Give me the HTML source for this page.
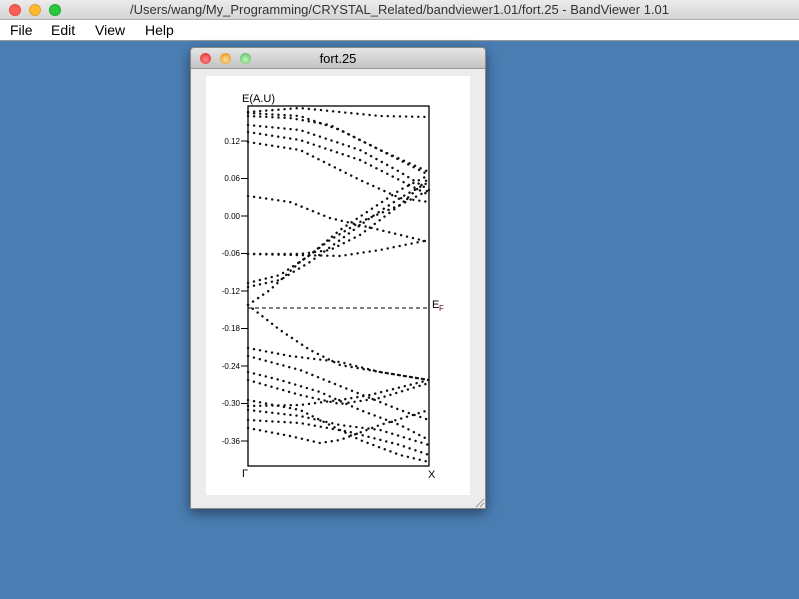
<!DOCTYPE html>
<html><head><meta charset="utf-8"><style>
*{margin:0;padding:0;box-sizing:border-box}
body{width:799px;height:599px;overflow:hidden;background:#4a7db2;font-family:"Liberation Sans",sans-serif;position:relative}
#tb{position:absolute;left:0;top:0;width:799px;height:20px;background:linear-gradient(#ececec,#d4d4d4);border-bottom:1px solid #b0b0b0;text-align:center;font-size:13px;line-height:20px;color:#333}
.d{position:absolute;width:12px;height:12px;border-radius:50%;top:4px}
#mb{position:absolute;left:0;top:20px;width:799px;height:21px;background:#fff;border-bottom:1px solid #999;font-size:14px;line-height:21px}
#mb span{position:absolute;top:0}
#win{position:absolute;left:190px;top:47px;width:296px;height:462px;background:#ececec;border:1px solid #888;border-radius:4px 4px 0 0;box-shadow:0 4px 12px rgba(0,0,0,.45)}
#wt{height:21px;background:linear-gradient(#e6e6e6,#c2c2c2);border-bottom:1px solid #999;text-align:center;font-size:13px;line-height:21px;border-radius:4px 4px 0 0}
.s{position:absolute;width:11px;height:11px;border-radius:50%;top:5px}
</style></head><body>
<div id="tb">/Users/wang/My_Programming/CRYSTAL_Related/bandviewer1.01/fort.25 - BandViewer 1.01</div>
<div class="d" style="left:9px;background:#fc5f57;border:1px solid #df4744"></div>
<div class="d" style="left:29px;background:#fdbc2e;border:1px solid #de9f34"></div>
<div class="d" style="left:49px;background:#28c840;border:1px solid #1aab29"></div>
<div id="mb"><span style="left:10px">File</span><span style="left:51px">Edit</span><span style="left:95px">View</span><span style="left:145px">Help</span></div>
<div id="win"><div id="wt">fort.25</div>
<div class="s" style="left:9px;background:radial-gradient(circle at 50% 60%,#f88,#d22);"></div>
<div class="s" style="left:29px;background:radial-gradient(circle at 50% 60%,#fd9,#d80);"></div>
<div class="s" style="left:49px;background:radial-gradient(circle at 50% 60%,#bfb,#5a5);"></div>
</div>
<svg style="position:absolute;left:0;top:0" width="799" height="599">
<rect x="206" y="76" width="264" height="419" fill="#fff"/>
<rect x="248" y="106" width="181" height="360" fill="none" stroke="#000" stroke-width="1.3"/>
<text x="242" y="102" font-size="11" font-family="Liberation Sans">E(A.U)</text>
<g font-size="8" font-family="Liberation Sans" text-anchor="end">
<text x="240" y="144">0.12</text><text x="240" y="181">0.06</text><text x="240" y="219">0.00</text><text x="240" y="256">-0.06</text><text x="240" y="294">-0.12</text><text x="240" y="331">-0.18</text><text x="240" y="369">-0.24</text><text x="240" y="406">-0.30</text><text x="240" y="444">-0.36</text>
</g>
<g stroke="#000" stroke-width="1"><line x1="241" y1="141" x2="248" y2="141"/><line x1="241" y1="178.5" x2="248" y2="178.5"/><line x1="241" y1="216" x2="248" y2="216"/><line x1="241" y1="253.5" x2="248" y2="253.5"/><line x1="241" y1="291" x2="248" y2="291"/><line x1="241" y1="328.5" x2="248" y2="328.5"/><line x1="241" y1="366" x2="248" y2="366"/><line x1="241" y1="403.5" x2="248" y2="403.5"/><line x1="241" y1="441" x2="248" y2="441"/></g>
<line x1="248" y1="308" x2="429" y2="308" stroke="#000" stroke-dasharray="4 3"/>
<text x="432" y="308" font-size="11" font-family="Liberation Sans">E</text><text x="439" y="311" font-size="8" fill="#602" font-family="Liberation Sans">F</text>
<text x="242" y="477" font-size="11" font-family="Liberation Sans">Γ</text><text x="428" y="478" font-size="11" font-family="Liberation Sans">X</text>
<g fill="none" stroke="#111" stroke-width="2.4" stroke-linecap="round" stroke-dasharray="0.1 6">
<polyline points="248,112 300,108 340,112 380,116 429,117"/>
<polyline points="248,113 300,116 340,130 380,150 429,175"/>
<polyline points="248,116 290,118 330,125 380,150 429,172"/>
<polyline points="248,125 300,130 360,150 400,172 429,190"/>
<polyline points="248,132 300,140 360,160 429,195"/>
<polyline points="248,142 300,150 360,180 400,198 429,202"/>
<polyline points="248,196 290,202 330,218 380,230 429,242"/>
<polyline points="248,254 300,254 330,250 360,235 400,205 429,178"/>
<polyline points="248,283 280,275 310,255 340,230 370,210 400,190 429,175"/>
<polyline points="248,287 280,280 310,262 340,240 370,218 400,198 429,182"/>
<polyline points="248,305 270,290 300,262 330,240 360,222 400,205 429,190"/>
<polyline points="248,254 340,256 380,250 429,240"/>
<polyline points="248,305 280,330 310,350 340,365 380,372 429,380"/>
<polyline points="248,348 290,356 340,362 380,372 429,380"/>
<polyline points="248,356 300,370 350,390 400,410 429,420"/>
<polyline points="248,372 280,380 320,392 360,410 400,425 429,440"/>
<polyline points="248,380 300,395 340,404 380,398 429,383"/>
<polyline points="248,406 300,405 340,400 370,395 429,380"/>
<polyline points="248,410 300,416 340,425 380,430 429,445"/>
<polyline points="248,420 300,423 350,432 400,445 429,455"/>
<polyline points="248,428 290,436 320,443 340,440 380,425 429,410"/>
<polyline points="248,400 300,410 360,440 400,455 429,462"/>
</g>
<g stroke="#999"><line x1="476" y1="507" x2="484" y2="499"/><line x1="480" y1="507" x2="484" y2="503"/></g>
</svg>
</body></html>
